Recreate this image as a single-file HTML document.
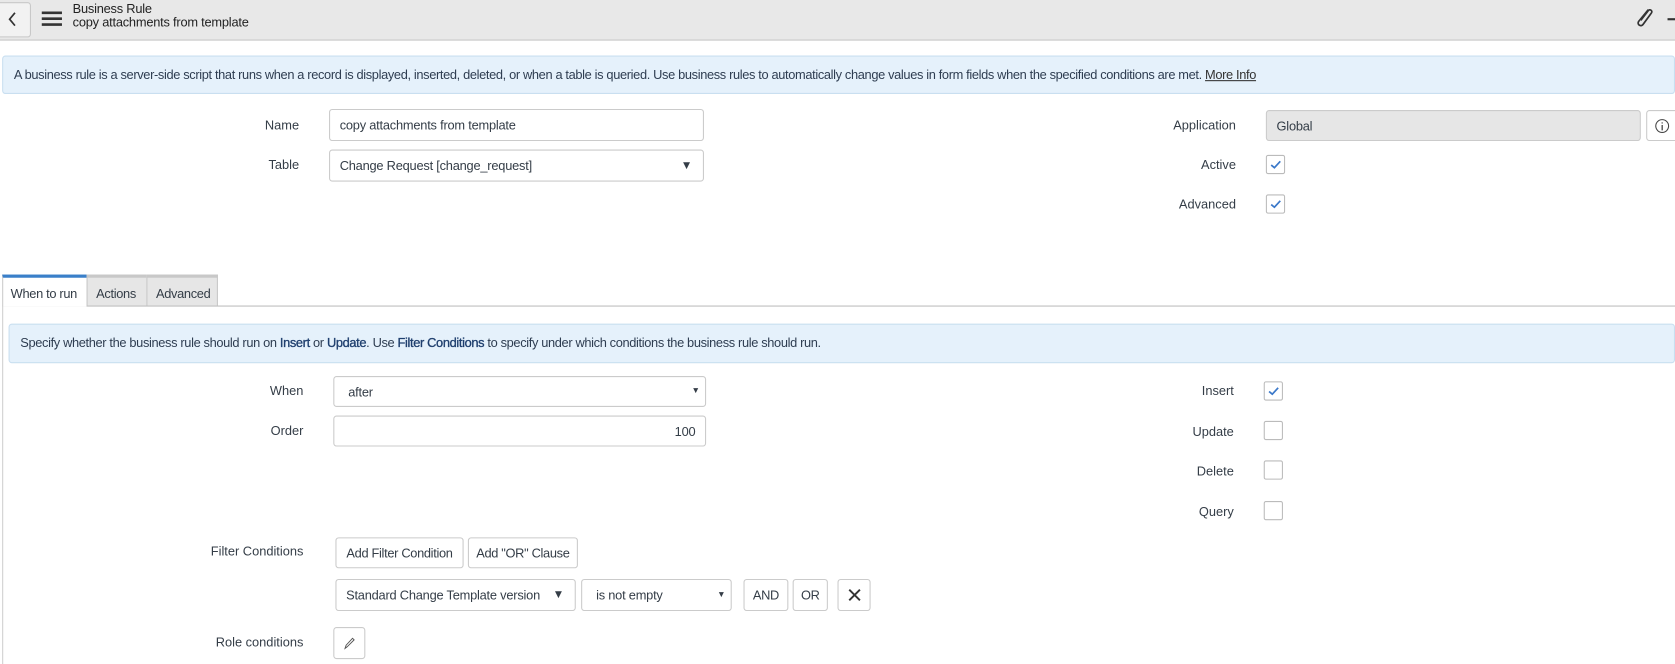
<!DOCTYPE html>
<html><head><style>
html,body{margin:0;padding:0;width:1675px;height:664px;overflow:hidden;background:#fff}
#w{position:absolute;left:0;top:0;width:1568px;height:622px;transform:scale(1.06824);transform-origin:0 0;font-family:"Liberation Sans",sans-serif;font-size:12px;color:#343d47}
.a{position:absolute}
.lbl{position:absolute;text-align:right;width:200px;color:#343d47}
.inp{position:absolute;border:1px solid #cbcbcb;border-radius:3px;background:#fff;box-sizing:border-box;padding-left:9px;display:flex;align-items:center;letter-spacing:-0.2px}
.cb{position:absolute;width:18px;height:18px;border:1px solid #bbb;border-radius:2px;box-sizing:border-box;background:#fff}
.btn{position:absolute;border:1px solid #cbcbcb;border-radius:3px;box-sizing:border-box;display:flex;align-items:center;justify-content:center;background:#fff;letter-spacing:-0.3px}
</style></head><body><div id="w">
<div class="a" style="left:0;top:0;width:1568px;height:37px;background:#e8e8e8;border-bottom:1px solid #c8c8c8"></div>
<div class="a" style="left:-3px;top:2px;width:30px;height:31px;border:1px solid #c8c8c8;border-radius:3px;background:#f2f2f2"></div>
<svg class="a" style="left:7px;top:11px" width="10" height="14"><path d="M7 1L2 7L7 13" fill="none" stroke="#333" stroke-width="1.6"/></svg>
<svg class="a" style="left:39px;top:10px" width="20" height="15"><path d="M0 2H19M0 7.5H19M0 13H19" stroke="#333" stroke-width="2.4"/></svg>
<div class="a" style="left:68px;top:2px;color:#222;line-height:13px;letter-spacing:-0.2px">Business Rule<br>copy attachments from template</div>
<svg class="a" style="left:1528px;top:5px" width="22" height="24"><path d="M15 4L6 15a2.5 2.5 0 0 0 4 3L18 7a1.8 1.8 0 0 0-3-2L8 14" fill="none" stroke="#333" stroke-width="1.6"/></svg>
<div class="a" style="left:1561px;top:17px;width:7px;height:1.5px;background:#333"></div>

<div class="a" style="left:2px;top:52px;width:1566px;height:36px;background:#e5f1fb;border:1px solid #c9dff0;box-sizing:border-box;border-radius:3px;padding-left:10px;line-height:34px;color:#2e3d51;white-space:nowrap;letter-spacing:-0.33px">A business rule is a server-side script that runs when a record is displayed, inserted, deleted, or when a table is queried. Use business rules to automatically change values in form fields when the specified conditions are met. <span style="text-decoration:underline;color:#333">More Info</span></div>

<div class="lbl" style="left:80px;top:110px">Name</div>
<div class="inp" style="left:308px;top:102px;width:351px;height:30px">copy attachments from template</div>
<div class="lbl" style="left:80px;top:147px">Table</div>
<div class="inp" style="left:308px;top:140px;width:351px;height:30px">Change Request [change_request]<span class="a" style="right:10px;top:8px;font-size:11px">▼</span></div>
<div class="lbl" style="left:957px;top:110px">Application</div>
<div class="inp" style="left:1185px;top:103px;width:351px;height:29px;background:#e6e6e6">Global</div>
<div class="btn" style="left:1541px;top:103px;width:30px;height:29px"><svg width="14" height="14"><circle cx="7" cy="7" r="6" fill="none" stroke="#444"/><path d="M7 6V11M7 3.5V4.6" stroke="#444" stroke-width="1.2"/></svg></div>
<div class="lbl" style="left:957px;top:147px">Active</div>
<div class="cb" style="left:1185px;top:145px"><svg width="16" height="16"><path d="M4 8.5L7 11L12.5 5" fill="none" stroke="#3a78c9" stroke-width="1.6"/></svg></div>
<div class="lbl" style="left:957px;top:184px">Advanced</div>
<div class="cb" style="left:1185px;top:182px"><svg width="16" height="16"><path d="M4 8.5L7 11L12.5 5" fill="none" stroke="#3a78c9" stroke-width="1.6"/></svg></div>

<div class="a" style="left:2px;top:286px;width:1566px;height:1px;background:#bdbdbd"></div>
<div class="a" style="left:2px;top:286px;width:1px;height:336px;background:#cfcfcf"></div>
<div class="a" style="left:2px;top:257px;width:79px;height:30px;background:#fff;border-top:3px solid #3a7fc9;border-left:1px solid #ccc;box-sizing:border-box;padding:8px 0 0 7px;letter-spacing:-0.3px">When to run</div>
<div class="a" style="left:81px;top:257px;width:56px;height:29px;background:#e6e6e6;border-top:3px solid #c8c8c8;border-left:1px solid #c8c8c8;box-sizing:border-box;padding:8px 0 0 8px;letter-spacing:-0.3px">Actions</div>
<div class="a" style="left:137px;top:257px;width:67px;height:29px;background:#e6e6e6;border-top:3px solid #c8c8c8;border-left:1px solid #c8c8c8;border-right:1px solid #c8c8c8;box-sizing:border-box;padding:8px 0 0 8px;letter-spacing:-0.3px">Advanced</div>

<div class="a" style="left:8px;top:303px;width:1560px;height:37px;background:#e5f1fb;border:1px solid #c9dff0;box-sizing:border-box;border-radius:3px;padding-left:10px;line-height:34px;color:#2e3d51;white-space:nowrap;letter-spacing:-0.33px">Specify whether the business rule should run on <b style="color:#1f3f6e;font-weight:normal;-webkit-text-stroke:0.3px">Insert</b> or <b style="color:#1f3f6e;font-weight:normal;-webkit-text-stroke:0.3px">Update</b>. Use <b style="color:#1f3f6e;font-weight:normal;-webkit-text-stroke:0.3px">Filter Conditions</b> to specify under which conditions the business rule should run.</div>

<div class="lbl" style="left:84px;top:359px">When</div>
<div class="inp" style="left:312px;top:352px;width:349px;height:29px;padding-left:13px">after<span class="a" style="right:5px;top:8px;font-size:8px">▼</span></div>
<div class="lbl" style="left:84px;top:396px">Order</div>
<div class="inp" style="left:312px;top:389px;width:349px;height:29px;justify-content:flex-end;padding-right:9px">100</div>
<div class="lbl" style="left:955px;top:359px">Insert</div>
<div class="cb" style="left:1183px;top:357px"><svg width="16" height="16"><path d="M4 8.5L7 11L12.5 5" fill="none" stroke="#3a78c9" stroke-width="1.6"/></svg></div>
<div class="lbl" style="left:955px;top:397px">Update</div>
<div class="cb" style="left:1183px;top:394px"></div>
<div class="lbl" style="left:955px;top:434px">Delete</div>
<div class="cb" style="left:1183px;top:431px"></div>
<div class="lbl" style="left:955px;top:472px">Query</div>
<div class="cb" style="left:1183px;top:469px"></div>

<div class="lbl" style="left:84px;top:509px">Filter Conditions</div>
<div class="btn" style="left:314px;top:503px;width:120px;height:29px">Add Filter Condition</div>
<div class="btn" style="left:438px;top:503px;width:103px;height:29px">Add "OR" Clause</div>
<div class="inp" style="left:314px;top:542px;width:225px;height:30px">Standard Change Template version<span class="a" style="right:10px;top:8px;font-size:11px">▼</span></div>
<div class="inp" style="left:544px;top:542px;width:141px;height:30px;padding-left:13px">is not empty<span class="a" style="right:5px;top:9px;font-size:8px">▼</span></div>
<div class="btn" style="left:696px;top:542px;width:42px;height:30px">AND</div>
<div class="btn" style="left:742px;top:542px;width:33px;height:30px">OR</div>
<div class="btn" style="left:784px;top:542px;width:31px;height:30px"><svg width="12" height="12"><path d="M1 1L11 11M11 1L1 11" stroke="#333" stroke-width="1.8"/></svg></div>
<div class="lbl" style="left:84px;top:594px">Role conditions</div>
<div class="btn" style="left:312px;top:587px;width:30px;height:30px"><svg width="12" height="12"><path d="M2 11L3 8L9 1.5L10.5 3L4 9.5Z" fill="none" stroke="#555" stroke-width="0.9"/></svg></div>
</div></body></html>
